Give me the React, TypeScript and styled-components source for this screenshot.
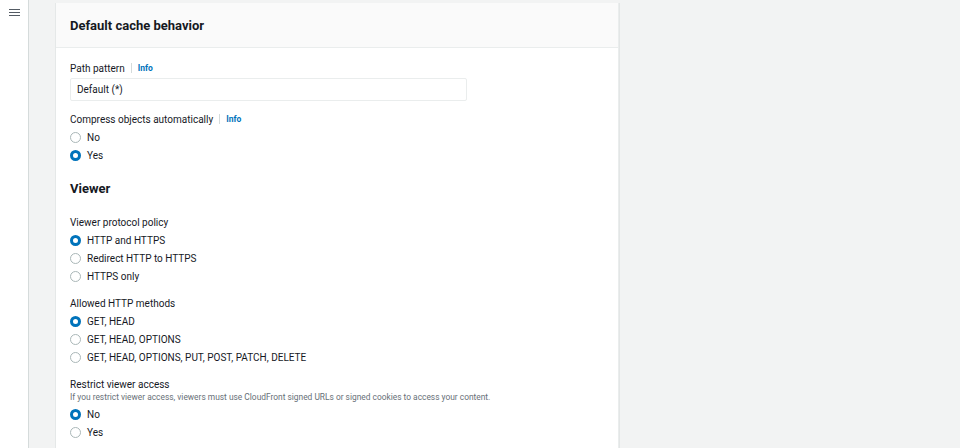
import * as React from "react";
import styled, { createGlobalStyle } from "styled-components";

const GlobalStyle = createGlobalStyle`
  html, body {
    margin: 0;
    padding: 0;
    background: #f2f3f3;
    font-family: Roboto, "Liberation Sans", Arial, sans-serif;
    color: #16191f;
  }
  * {
    box-sizing: border-box;
  }
`;

const Layout = styled.div`
  display: flex;
  min-height: 448px;
`;

const Nav = styled.nav`
  width: 29px;
  flex-shrink: 0;
  background: #ffffff;
  border-right: 1px solid #d5dbdb;
  padding: 9px 0 0 9px;
`;

const Hamburger = styled.button`
  display: flex;
  flex-direction: column;
  gap: 2px;
  width: 11px;
  padding: 0;
  border: 0;
  background: none;
  cursor: pointer;

  span {
    display: block;
    height: 1px;
    background: #545b64;
  }
`;

const Main = styled.main`
  flex: 1;
  padding: 3px 0 0 26px;
`;

const Card = styled.section`
  width: 563px;
  min-height: 460px;
  background: #ffffff;
  border-left: 1px solid #e5e8e8;
  box-shadow: 1px 0 0 #eaeded, 2px 0 0 #e3e6e6;
`;

const CardHeader = styled.header`
  height: 45px;
  display: flex;
  align-items: center;
  padding: 0 14px;
  background: #fafafa;
  border-bottom: 1px solid #eaeded;
`;

const Title = styled.h2`
  margin: 0;
  font-size: 13px;
  font-weight: 700;
  color: #16191f;
`;

const CardBody = styled.div`
  padding: 13px 14px 0;
`;

const Field = styled.div<{ $gap?: number }>`
  margin-top: ${(p) => p.$gap ?? 11}px;
`;

const LabelRow = styled.div`
  display: flex;
  align-items: center;
  height: 14px;
  font-size: 10px;
  color: #16191f;
`;

const InfoLink = styled.a`
  display: flex;
  align-items: center;
  margin-left: 6px;
  padding-left: 6px;
  height: 10px;
  border-left: 1px solid #d5dbdb;
  color: #0073bb;
  font-size: 8.5px;
  font-weight: 700;
  text-decoration: none;
`;

const Description = styled.div`
  font-size: 8.4px;
  line-height: 12px;
  color: #687078;
`;

const TextInput = styled.input`
  display: block;
  width: 397px;
  height: 23px;
  margin-top: 3px;
  padding: 0 6px;
  border: 1px solid #eaeded;
  border-radius: 2px;
  background: #ffffff;
  font-family: inherit;
  font-size: 10px;
  color: #16191f;
  outline: none;
`;

const RadioList = styled.div`
  margin-top: 2px;
`;

const RadioRow = styled.label`
  display: flex;
  align-items: center;
  height: 18px;
  font-size: 10px;
  color: #16191f;
  cursor: pointer;
`;

const RadioDot = styled.span<{ $checked: boolean }>`
  width: 11px;
  height: 11px;
  margin-right: 6px;
  border-radius: 50%;
  background: #ffffff;
  border: ${(p) => (p.$checked ? "3px solid #0073bb" : "1px solid #aab7b8")};
`;

const SectionTitle = styled.h3`
  margin: 17px 0 0;
  height: 16px;
  line-height: 16px;
  font-size: 13px;
  font-weight: 700;
  color: #16191f;
`;

interface IRadioGroup {
  options: string[];
  value: string;
  onChange: (v: string) => void;
}

const RadioGroup: React.FC<IRadioGroup> = ({ options, value, onChange }) => (
  <RadioList>
    {options.map((opt) => (
      <RadioRow key={opt} onClick={() => onChange(opt)}>
        <RadioDot $checked={opt === value} />
        {opt}
      </RadioRow>
    ))}
  </RadioList>
);

const App: React.FC = () => {
  const [compress, setCompress] = React.useState("Yes");
  const [protocol, setProtocol] = React.useState("HTTP and HTTPS");
  const [methods, setMethods] = React.useState("GET, HEAD");
  const [restrict, setRestrict] = React.useState("No");

  return (
    <>
      <GlobalStyle />
      <Layout>
        <Nav>
          <Hamburger aria-label="Open navigation">
            <span />
            <span />
            <span />
          </Hamburger>
        </Nav>
        <Main>
          <Card>
            <CardHeader>
              <Title>Default cache behavior</Title>
            </CardHeader>
            <CardBody>
              <Field $gap={0}>
                <LabelRow>
                  Path pattern
                  <InfoLink href="#">Info</InfoLink>
                </LabelRow>
                <TextInput readOnly value="Default (*)" />
              </Field>

              <Field $gap={11}>
                <LabelRow>
                  Compress objects automatically
                  <InfoLink href="#">Info</InfoLink>
                </LabelRow>
                <RadioGroup
                  options={["No", "Yes"]}
                  value={compress}
                  onChange={setCompress}
                />
              </Field>

              <SectionTitle>Viewer</SectionTitle>

              <Field $gap={18}>
                <LabelRow>Viewer protocol policy</LabelRow>
                <RadioGroup
                  options={[
                    "HTTP and HTTPS",
                    "Redirect HTTP to HTTPS",
                    "HTTPS only",
                  ]}
                  value={protocol}
                  onChange={setProtocol}
                />
              </Field>

              <Field>
                <LabelRow>Allowed HTTP methods</LabelRow>
                <RadioGroup
                  options={[
                    "GET, HEAD",
                    "GET, HEAD, OPTIONS",
                    "GET, HEAD, OPTIONS, PUT, POST, PATCH, DELETE",
                  ]}
                  value={methods}
                  onChange={setMethods}
                />
              </Field>

              <Field>
                <LabelRow>Restrict viewer access</LabelRow>
                <Description>
                  If you restrict viewer access, viewers must use CloudFront
                  signed URLs or signed cookies to access your content.
                </Description>
                <RadioGroup
                  options={["No", "Yes"]}
                  value={restrict}
                  onChange={setRestrict}
                />
              </Field>
            </CardBody>
          </Card>
        </Main>
      </Layout>
    </>
  );
};

export default App;
